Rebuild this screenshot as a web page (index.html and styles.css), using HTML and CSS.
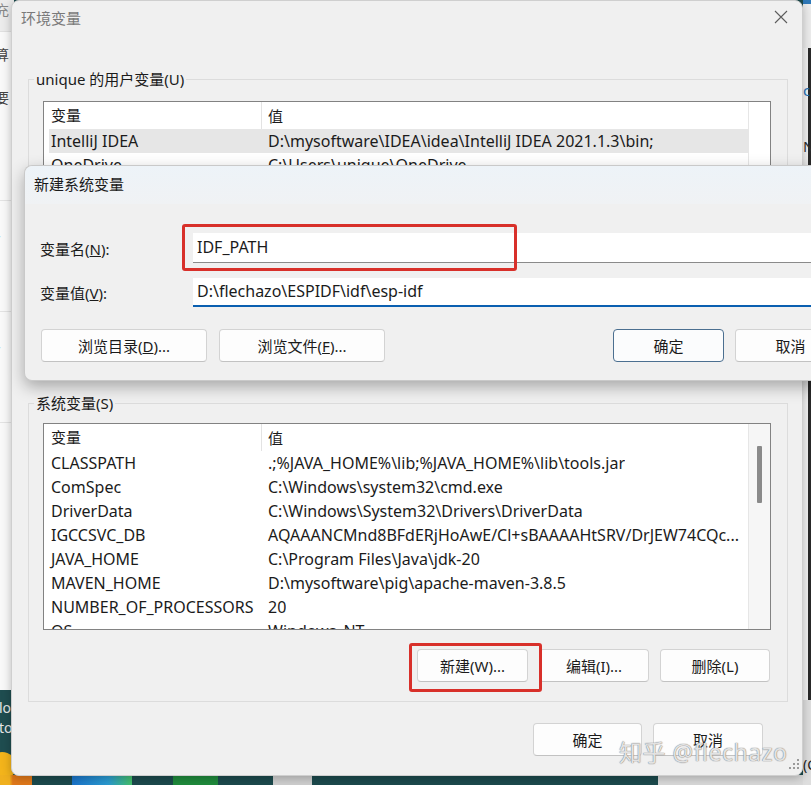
FILE: index.html
```html
<!DOCTYPE html>
<html lang="zh-CN">
<head>
<meta charset="utf-8">
<title>环境变量</title>
<link rel="stylesheet" href="styles.css">
</head>
<body>
<div class="screen">
  <div class="bgwin">
    <div class="bg-top"><span>充</span></div>
    <div class="bg-body">
      <div class="bg-line l1">算</div>
      <div class="bg-line l2">要</div>
      <div class="bg-line l3">(</div>
      <div class="bg-sep"></div>
      <div class="bg-line l4">/</div>
      <div class="bg-sep"></div>
      <div class="bg-line l5">/</div>
      <div class="bg-sep"></div>
    </div>
    <div class="bg-desk">
      <div>lo</div>
      <div>to</div>
      <div class="bg-icon"></div>
    </div>
  </div>

  <div class="taskrow">
    <div class="ti ti-orange"></div>
    <div class="ti ti-teal w40"></div>
    <div class="ti ti-blue"></div>
    <div class="ti ti-teal w41"></div>
    <div class="ti ti-green"></div>
    <div class="ti ti-teal w55"></div>
    <div class="ti ti-gray"></div>
    <div class="ti ti-teal grow"></div>
    <div class="ti ti-light"></div>
  </div>

  <div class="rstrip">
    <div class="rs-top"></div>
    <div class="rs-mid"><span class="rs-c">c</span><span class="rs-n">N</span></div>
    <div class="rs-bot"><span>(C</span></div>
  </div>

  <div class="env">
    <div class="env-title">
      <span class="env-name">环境变量</span>
      <svg class="close" width="14" height="14" viewBox="0 0 14 14"><path d="M1 1 L13 13 M13 1 L1 13" stroke="#5c5c5c" stroke-width="1.1" fill="none"/></svg>
    </div>

    <div class="grp grp-user">
      <div class="grp-label">unique 的用户变量(U)</div>
      <div class="list list-user">
        <div class="list-body">
          <div class="lhead"><div class="c1">变量</div><div class="c2">值</div></div>
          <div class="lrow sel"><div class="c1">IntelliJ IDEA</div><div class="c2">D:\mysoftware\IDEA\idea\IntelliJ IDEA 2021.1.3\bin;</div></div>
          <div class="lrow"><div class="c1">OneDrive</div><div class="c2">C:\Users\unique\OneDrive</div></div>
          <div class="lrow"><div class="c1">Path</div><div class="c2">C:\Users\unique\AppData\Local\Microsoft\WindowsApps;</div></div>
        </div>
        <div class="vscroll vscroll-white"></div>
      </div>
    </div>

    <div class="grp grp-sys">
      <div class="grp-label">系统变量(S)</div>
      <div class="list list-sys">
        <div class="list-body">
          <div class="lhead"><div class="c1">变量</div><div class="c2">值</div></div>
          <div class="lrow"><div class="c1">CLASSPATH</div><div class="c2">.;%JAVA_HOME%\lib;%JAVA_HOME%\lib\tools.jar</div></div>
          <div class="lrow"><div class="c1">ComSpec</div><div class="c2">C:\Windows\system32\cmd.exe</div></div>
          <div class="lrow"><div class="c1">DriverData</div><div class="c2">C:\Windows\System32\Drivers\DriverData</div></div>
          <div class="lrow"><div class="c1">IGCCSVC_DB</div><div class="c2">AQAAANCMnd8BFdERjHoAwE/Cl+sBAAAAHtSRV/DrJEW74CQc...</div></div>
          <div class="lrow"><div class="c1">JAVA_HOME</div><div class="c2">C:\Program Files\Java\jdk-20</div></div>
          <div class="lrow"><div class="c1">MAVEN_HOME</div><div class="c2">D:\mysoftware\pig\apache-maven-3.8.5</div></div>
          <div class="lrow"><div class="c1">NUMBER_OF_PROCESSORS</div><div class="c2">20</div></div>
          <div class="lrow"><div class="c1">OS</div><div class="c2">Windows_NT</div></div>
        </div>
        <div class="vscroll"><div class="thumb"></div></div>
      </div>
      <div class="btnrow">
        <button class="btn w111">新建(W)...</button>
        <button class="btn w110">编辑(I)...</button>
        <button class="btn w110">删除(L)</button>
      </div>
    </div>

    <div class="footer">
      <button class="btn w109">确定</button>
      <button class="btn w110">取消</button>
    </div>

    <svg class="grip" width="10" height="10" viewBox="0 0 10 10">
      <rect x="8" y="0" width="2" height="2" fill="#9a9a9a"/>
      <rect x="4" y="4" width="2" height="2" fill="#9a9a9a"/>
      <rect x="8" y="4" width="2" height="2" fill="#9a9a9a"/>
      <rect x="0" y="8" width="2" height="2" fill="#9a9a9a"/>
      <rect x="4" y="8" width="2" height="2" fill="#9a9a9a"/>
      <rect x="8" y="8" width="2" height="2" fill="#9a9a9a"/>
    </svg>
  </div>

  <div class="newdlg">
    <div class="nd-title">新建系统变量</div>
    <div class="nd-form">
      <div class="nd-row">
        <label class="nd-label">变量名(<u>N</u>):</label>
        <div class="nd-input">IDF_PATH</div>
      </div>
      <div class="nd-row">
        <label class="nd-label">变量值(<u>V</u>):</label>
        <div class="nd-input focus">D:\flechazo\ESPIDF\idf\esp-idf</div>
      </div>
    </div>
    <div class="nd-btns">
      <div class="nd-left">
        <button class="btn w166">浏览目录(<u>D</u>)...</button>
        <button class="btn w166">浏览文件(<u>F</u>)...</button>
      </div>
      <div class="nd-right">
        <button class="btn btn-default w111">确定</button>
        <button class="btn w111">取消</button>
      </div>
    </div>
  </div>

  <div class="redbox rb1"></div>
  <div class="redbox rb2"></div>

  <div class="watermark">知乎 @flechazo</div>
</div>
</body>
</html>
```

FILE: styles.css
```css
* { box-sizing: border-box; }
html, body { margin: 0; padding: 0; }
body {
  font-family: "Noto Sans", "Noto Sans CJK SC", sans-serif;
  font-size: 15px;
  color: #1b1b1b;
}
.screen {
  position: relative;
  width: 811px;
  height: 785px;
  overflow: hidden;
  background: #1c4a4d;
}

/* background window on the left */
.bgwin {
  position: absolute;
  left: 0; top: 0;
  width: 14px; height: 785px;
  display: flex;
  flex-direction: column;
  overflow: hidden;
}
.bg-top {
  height: 32px;
  background: #ececec;
  border-bottom: 1px solid #e0e0e0;
  color: #888;
  font-size: 14px;
  line-height: 20px;
  text-indent: -5px;
}
.bg-body {
  height: 658px;
  background: #f9f9f9;
  display: flex;
  flex-direction: column;
}
.bg-line {
  font-size: 14px;
  color: #444;
  height: 20px;
  line-height: 20px;
  text-indent: -5px;
}
.l1 { margin-top: 13px; }
.l2 { margin-top: 23px; }
.l3 { margin-top: 12px; color: #999; }
.bg-sep { height: 1px; background: #e3e3e3; margin: 60px 0 30px; }
.bg-desk {
  flex: 1;
  background: #1f4d50;
  color: #e8e8e8;
  font-size: 14px;
  line-height: 20px;
  padding-top: 8px;
}
.bg-desk div { text-indent: -1px; }
.bg-icon {
  width: 28px; height: 28px;
  margin: 14px 0 0 -12px;
  border-radius: 50%;
  background: #f3b41b;
}

/* taskbar row at the bottom */
.taskrow {
  position: absolute;
  left: 0; top: 775px;
  width: 811px; height: 10px;
  display: flex;
}
.ti { height: 10px; }
.ti-orange { width: 32px; background: linear-gradient(90deg, #f0b01e 30%, #e0781a 40%); }
.ti-teal { background: #1c4a4d; }
.w40 { width: 40px; }
.w41 { width: 41px; }
.w55 { width: 55px; }
.grow { flex: 1; }
.ti-blue { width: 60px; background: linear-gradient(90deg, #1a73c9, #2a9ad0 60%, #44c06a); }
.ti-green { width: 45px; background: #1f8a3c; }
.ti-gray { width: 39px; background: #cfcfcf; }
.ti-light { width: 153px; background: #d9d9d9; }

/* right strip */
.rstrip {
  position: absolute;
  left: 803px; top: 0;
  width: 8px; height: 785px;
  display: flex;
  flex-direction: column;
}
.rs-top { height: 48px; background: linear-gradient(#2e78b8 0 4px, #ececec 4px); }
.rs-mid {
  height: 652px;
  background: #f2f2f2;
  border-right: 3px solid #2a2a2a;
  position: relative;
  font-size: 15px;
}
.rs-c { position: absolute; left: 0; top: 32px; color: #1f6fb5; }
.rs-n { position: absolute; left: 0; top: 88px; color: #333; }
.rs-bot {
  flex: 1;
  background: #dedede;
  font-size: 14px;
  color: #222;
  padding-top: 55px;
}

/* main env dialog */
.env {
  position: absolute;
  left: 11px; top: 0;
  width: 792px; height: 776px;
  background: #f0f0f0;
  border: 1px solid #cfcfcf;
  border-radius: 8px;
  box-shadow: 0 2px 10px rgba(0,0,0,0.25);
}
.env-title {
  height: 36px;
  display: flex;
  align-items: center;
  justify-content: space-between;
  padding: 0 14px 4px 9px;
  color: #7a7a7a;
  font-size: 15px;
}

.grp {
  border: 1px solid #dcdcdc;
  margin: 0 14px 0 16px;
  padding: 0 16px 0 14px;
}
.grp-label {
  display: table;
  margin: -11px 0 0 -9px;
  padding: 0 2px;
  background: #f0f0f0;
  line-height: 20px;
  font-size: 15px;
}
.grp-user { margin-top: 42px; padding-bottom: 20px; }
.grp-user .list { margin-top: 12px; }
.grp-sys { margin-top: 81px; padding-bottom: 19px; }
.grp-sys .list { margin-top: 10px; }

.list {
  display: flex;
  background: #fff;
  border: 1px solid #828282;
  overflow: hidden;
}
.list-user { height: 200px; }
.list-sys { height: 207px; }
.list-body { flex: 1; padding-left: 5px; min-width: 0; }
.lhead, .lrow { display: flex; white-space: nowrap; }
.lhead { height: 27px; align-items: center; }
.lrow { height: 24px; align-items: center; font-size: 16px; }
.c1 { width: 213px; padding-left: 2px; flex: none; }
.c2 { padding-left: 6px; overflow: hidden; }
.lhead .c1 { border-right: 1px solid #e3e3e3; height: 27px; line-height: 27px; }
.lrow.sel { background: #e6e6e6; }
.vscroll {
  width: 22px;
  flex: none;
  background: #f6f6f6;
  border-left: 1px solid #e6e6e6;
  padding: 22px 0 0 8px;
}
.vscroll-white { background: #fff; }
.thumb { width: 5px; height: 57px; background: #8a8a8a; border-radius: 1px; }

.btn {
  font: inherit;
  font-size: 15px;
  color: #1b1b1b;
  height: 33px;
  background: #fdfdfd;
  border: 1px solid #d3d3d3;
  border-bottom-color: #c2c2c2;
  border-radius: 4px;
  padding: 0;
  display: flex;
  align-items: center;
  justify-content: center;
}
.w109 { width: 109px; }
.w110 { width: 110px; }
.w111 { width: 111px; }
.w166 { width: 166px; }
.btn-default { border: 1px solid #4b6f90; background: #fbfcfd; }

.btnrow {
  display: flex;
  justify-content: flex-end;
  gap: 11px;
  margin-top: 19px;
  padding-right: 1px;
}
.footer {
  display: flex;
  justify-content: flex-end;
  gap: 11px;
  margin-top: 21px;
  padding-right: 39px;
}
.grip { position: absolute; right: 3px; bottom: 6px; }

/* new system variable dialog */
.newdlg {
  position: absolute;
  left: 24px; top: 165px;
  width: 840px; height: 216px;
  background: #f0f0f0;
  border: 1px solid #c9c9c9;
  border-right: none;
  border-radius: 8px 0 0 8px;
  box-shadow: 0 6px 16px rgba(0,0,0,0.3);
  display: flex;
  flex-direction: column;
}
.nd-title {
  height: 38px;
  line-height: 36px;
  padding-left: 9px;
  background: linear-gradient(#edf3f8, #f0f2f4);
  border-radius: 8px 0 0 0;
}
.nd-form {
  display: flex;
  flex-direction: column;
  gap: 15px;
  margin-top: 29px;
}
.nd-row { display: flex; align-items: center; }
.nd-label { width: 168px; padding-left: 15px; flex: none; }
.nd-input {
  flex: 1;
  height: 30px;
  background: #fff;
  border-bottom: 1px solid #8a8a8a;
  padding-left: 4px;
  line-height: 28px;
  font-size: 16px;
  white-space: nowrap;
}
.nd-input.focus { height: 29px; border-bottom: 2px solid #0a5fb0; line-height: 27px; }
.nd-btns {
  display: flex;
  justify-content: space-between;
  margin-top: 22px;
  padding: 0 18px 0 16px;
}
.nd-left, .nd-right { display: flex; gap: 12px; }
.nd-right { gap: 11px; }

.redbox {
  position: absolute;
  border: 3px solid #d8302a;
  border-radius: 3px;
}
.rb1 { left: 182px; top: 224px; width: 335px; height: 47px; }
.rb2 { left: 409px; top: 643px; width: 133px; height: 49px; }

.watermark {
  position: absolute;
  left: 619px; top: 736px;
  font-size: 23px;
  line-height: 32px;
  color: rgba(255,255,255,0.78);
  text-shadow: 0 0 1px #7d7d7d, 0 0 1px #7d7d7d;
  letter-spacing: 0.5px;
  white-space: nowrap;
}
```
